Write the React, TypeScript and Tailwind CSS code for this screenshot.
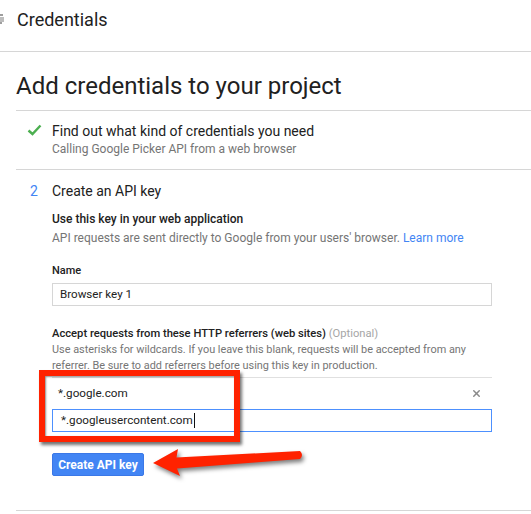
import { X } from 'lucide-react'

const font = { fontFamily: 'Roboto, "Liberation Sans", Arial, sans-serif' }

function CheckIcon() {
  return (
    <svg width="15" height="12" viewBox="0 0 15 12" className="shrink-0">
      <path d="M1.5 6.5 L5.5 10 L13.5 1.5" fill="none" stroke="#4caf50" strokeWidth="2.4" />
    </svg>
  )
}

export default function App() {
  return (
    <div className="relative h-[514px] w-[531px] overflow-hidden bg-white text-[#212121]" style={font}>
      {/* top bar */}
      <div className="flex h-[52px] items-start border-b border-[#d6d6d6] pt-[8px]">
        <svg width="4" height="10" viewBox="0 0 4 10" className="mt-[6px] shrink-0">
          <rect x="0" y="0" width="3" height="2" fill="#9e9e9e" />
          <rect x="0" y="3" width="4" height="5" fill="#bdbdbd" />
          <rect x="0" y="8" width="2" height="2" fill="#9e9e9e" />
        </svg>
        <span className="ml-[13px] text-[18px] leading-[24px] text-[#212121]">Credentials</span>
      </div>

      <div className="pl-4">
        <h1 className="mt-[20px] pb-[10px] text-[24px] leading-[28px] text-[#212121]">Add credentials to your project</h1>

        {/* step 1 */}
        <div className="flex border-t border-[#d6d6d6] pb-[12px] pt-[10px]">
          <div className="w-9 pl-[11px] pt-[3px]">
            <CheckIcon />
          </div>
          <div>
            <div className="text-[14px] leading-[20px] text-[#212121]">Find out what kind of credentials you need</div>
            <div className="text-[12px] leading-[16px] text-[#757575]">Calling Google Picker API from a web browser</div>
          </div>
        </div>

        {/* step 2 */}
        <div className="flex border-t border-[#d6d6d6] pt-[11px]">
          <div className="w-9 pl-[14px] text-[14px] leading-[20px] text-[#4285f4]">2</div>
          <div className="w-[440px]">
            <div className="text-[14px] leading-[20px] text-[#212121]">Create an API key</div>

            <div className="mt-[10px] text-[12px] font-medium leading-[16px] text-[#212121]">Use this key in your web application</div>
            <div className="mt-[3px] whitespace-nowrap text-[12px] leading-[16px] text-[#757575]">
              API requests are sent directly to Google from your users' browser.{' '}
              <span className="text-[#4285f4]">Learn more</span>
            </div>

            <div className="mt-[17px] text-[11px] font-medium leading-[16px] text-[#212121]">Name</div>
            <div className="mt-[4px] flex h-[23px] items-center border border-[#d6d6d6] px-[7px] text-[11.6px] text-[#212121]">
              Browser key 1
            </div>

            <div className="mt-[20px] text-[11.2px] font-medium leading-[16px] text-[#212121]">
              Accept requests from these HTTP referrers (web sites){' '}
              <span className="font-normal text-[#a6a6a6]">(Optional)</span>
            </div>
            <div className="text-[10.9px] leading-[16px] text-[#757575]">
              Use asterisks for wildcards. If you leave this blank, requests will be accepted from any referrer. Be sure to add referrers before using this key in production.
            </div>

            <div className="mt-[3px] flex h-[32px] items-center justify-between border-t border-[#e0e0e0] pl-[6px] pr-[10px]">
              <span className="text-[11.7px] text-[#212121]">*.google.com</span>
              <X size={11} strokeWidth={3.2} className="text-[#8a8a8a]" />
            </div>
            <div className="flex h-[23px] items-center border border-[#4d90fe] px-[8px] text-[11.7px] text-[#212121]">
              *.googleusercontent.com
              <span className="ml-[1px] h-[15px] w-px bg-[#111]" />
            </div>

            <button className="mt-[21px] flex h-[23px] w-[92px] items-center justify-center rounded-[2px] border border-[#3b78e7] bg-[#4285f4] text-[12px] font-bold text-white">
              Create API key
            </button>
          </div>
        </div>

        <div className="mt-[34px] border-t border-[#d6d6d6]" />
      </div>

      {/* annotations */}
      <div className="absolute left-[39px] top-[370px] h-[72px] w-[201px] border-[6px] border-[#ff2200] shadow-[2px_3px_3px_rgba(0,0,0,0.55),inset_1px_1px_2px_rgba(0,0,0,0.45)]" />
      <svg
        width="160"
        height="34"
        viewBox="150 446 160 34"
        className="absolute left-[150px] top-[446px] drop-shadow-[2px_3px_2px_rgba(0,0,0,0.5)]"
      >
        <path
          d="M153 463 L178 449 L176.5 457.5 L300 451 Q304 455 300 459 L177 468.5 L180 476 Z"
          fill="#ff2200"
        />
      </svg>
    </div>
  )
}
